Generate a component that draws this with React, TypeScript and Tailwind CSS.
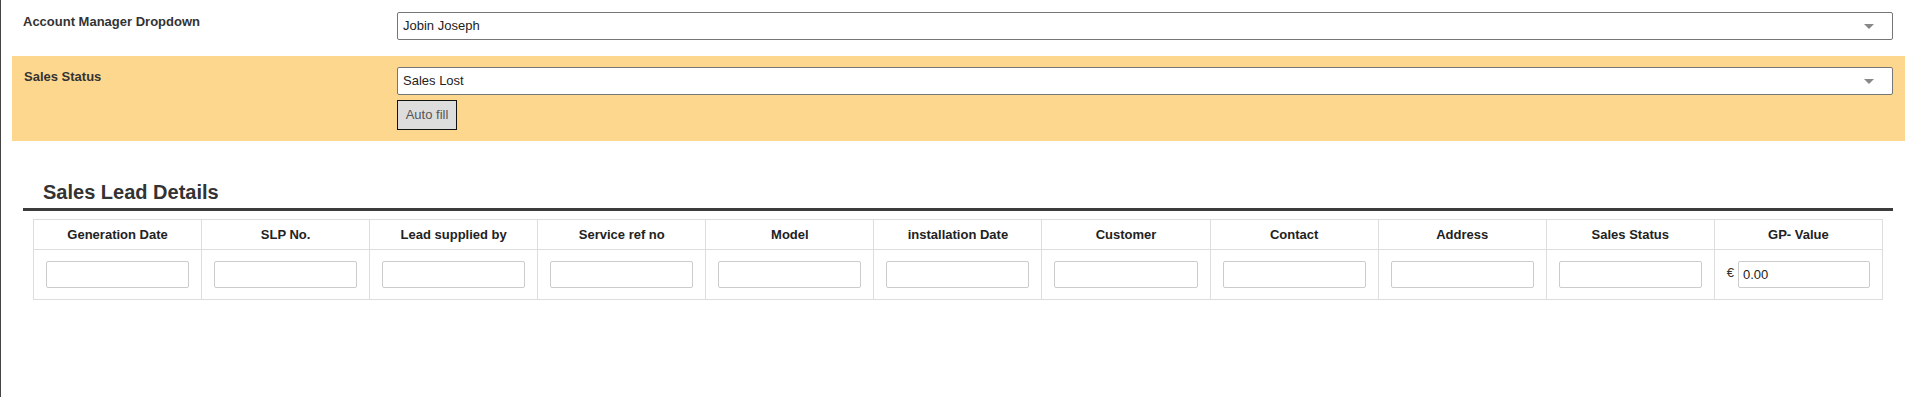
const columns = [
  'Generation Date',
  'SLP No.',
  'Lead supplied by',
  'Service ref no',
  'Model',
  'installation Date',
  'Customer',
  'Contact',
  'Address',
  'Sales Status',
  'GP- Value',
];

function Caret() {
  return (
    <svg className="h-[5px] w-[10px] text-[#888]" viewBox="0 0 10 5" fill="currentColor">
      <path d="M0 0h10L5 5z" />
    </svg>
  );
}

function FakeSelect({ value }: { value: string }) {
  return (
    <div className="flex h-[28px] w-full items-center justify-between rounded-[2px] border border-[#767676] bg-white pl-[5px] pr-[18px] text-[13px] text-[#222]">
      <span>{value}</span>
      <Caret />
    </div>
  );
}

export default function App() {
  return (
    <div className="h-[397px] w-full border-l border-[#444] bg-white font-['Liberation_Sans',Arial,sans-serif]">
      <div className="pr-[2px] pl-[11px]">
        {/* Account manager row */}
        <div className="grid grid-cols-[374px_1fr] pl-[11px] pr-3 pt-3 pb-[16px]">
          <label className="text-[13px] font-bold text-[#333]">Account Manager Dropdown</label>
          <FakeSelect value="Jobin Joseph" />
        </div>

        {/* Sales status band */}
        <div className="grid grid-cols-[373px_1fr] bg-[#fed78f] px-3 pt-[11px] pb-[11px]">
          <label className="text-[13px] font-bold text-[#333]">Sales Status</label>
          <div className="flex flex-col items-start gap-[5px]">
            <FakeSelect value="Sales Lost" />
            <button className="h-[30px] w-[60px] border border-[#111] bg-[#ddd] text-[13px] text-[#555]">
              Auto fill
            </button>
          </div>
        </div>

        {/* Sales lead details */}
        <div className="pt-[39px] pl-[11px] pr-[12px]">
          <h2 className="pl-[20px] text-[20px] leading-[24px] font-bold text-[#333]">Sales Lead Details</h2>
          <div className="mt-[4px] h-[3px] bg-[#3c3c3c]" />
          <div className="px-[10px] pt-[8px]">
            <table className="w-full table-fixed border-collapse text-[13px]">
              <thead>
                <tr>
                  {columns.map((c) => (
                    <th key={c} className="h-[30px] border border-[#ddd] text-center font-bold text-[#222]">
                      {c}
                    </th>
                  ))}
                </tr>
              </thead>
              <tbody>
                <tr>
                  {columns.map((c) => (
                    <td key={c} className="h-[50px] border border-[#ddd] px-3">
                      {c === 'GP- Value' ? (
                        <div className="flex items-center gap-[4px]">
                          <span className="-mt-[4px] text-[13px] text-[#333]">€</span>
                          <input
                            readOnly
                            value="0.00"
                            className="h-[27px] w-full rounded-[2px] border border-[#ccc] bg-white px-[4px] text-[13px] text-[#222] outline-none"
                          />
                        </div>
                      ) : (
                        <input
                          readOnly
                          className="h-[27px] w-full rounded-[2px] border border-[#ccc] bg-white outline-none"
                        />
                      )}
                    </td>
                  ))}
                </tr>
              </tbody>
            </table>
          </div>
        </div>
      </div>
    </div>
  );
}
